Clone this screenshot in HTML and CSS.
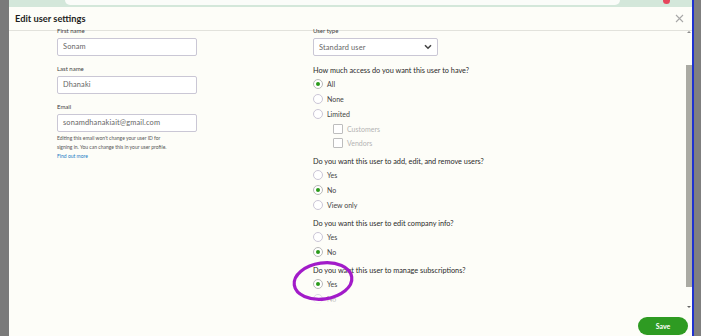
FILE: index.html
```html
<!DOCTYPE html>
<html>
<head>
<meta charset="utf-8">
<link rel="stylesheet" href="styles.css">
</head>
<body>
<div class="screen">
  <div class="side-left"></div>
  <div class="main">
    <div class="topbar"><div class="topbar-field"></div><div class="topbar-dot"></div></div>
    <div class="dialog">
      <div class="dialog-header">
        <h1 class="title">Edit user settings</h1>
        <svg class="close" width="9" height="9" viewBox="0 0 9 9"><path d="M1 1L8 8M8 1L1 8" stroke="#a8a8a8" stroke-width="1.1" fill="none"/></svg>
      </div>
      <div class="dialog-body">
        <div class="content">
          <div class="col-left">
            <div class="field-label">First name</div>
            <div class="input">Sonam</div>
            <div class="field-label">Last name</div>
            <div class="input">Dhanaki</div>
            <div class="field-label">Email</div>
            <div class="input input-email">sonamdhanakiait@gmail.com</div>
            <p class="help">Editing this email won't change your user ID for<br>signing in. You can change this in your user profile.<br><a class="link">Find out more</a></p>
          </div>
          <div class="col-right">
            <div class="field-label">User type</div>
            <div class="select"><span>Standard user</span><svg width="8" height="6" viewBox="0 0 8 6"><path d="M1 1.2L4 4.2L7 1.2" stroke="#444" stroke-width="1.6" fill="none"/></svg></div>
            <div class="question q-first">How much access do you want this user to have?</div>
            <div class="radio-row"><span class="radio checked"></span>All</div>
            <div class="radio-row"><span class="radio"></span>None</div>
            <div class="radio-row"><span class="radio"></span>Limited</div>
            <div class="check-row check-first"><span class="checkbox"></span>Customers</div>
            <div class="check-row"><span class="checkbox"></span>Vendors</div>
            <div class="question">Do you want this user to add, edit, and remove users?</div>
            <div class="radio-row"><span class="radio"></span>Yes</div>
            <div class="radio-row"><span class="radio checked"></span>No</div>
            <div class="radio-row"><span class="radio"></span>View only</div>
            <div class="question">Do you want this user to edit company info?</div>
            <div class="radio-row"><span class="radio"></span>Yes</div>
            <div class="radio-row"><span class="radio checked"></span>No</div>
            <div class="question">Do you want this user to manage subscriptions?</div>
            <div class="radio-row"><span class="radio checked"></span>Yes</div>
            <div class="radio-row"><span class="radio"></span>No</div>
            <div class="radio-row"><span class="radio"></span>View only</div>
          </div>
        </div>
        <div class="scrollbar">
          <div class="arrow-up"></div>
          <div class="thumb"></div>
          <div class="arrow-down"></div>
        </div>
      </div>
      <div class="dialog-footer"><button class="save">Save</button></div>
    </div>
  </div>
  <div class="side-right"></div>
  <svg class="annotation" width="66" height="46" viewBox="0 0 66 46"><ellipse cx="33" cy="23" rx="29" ry="18" transform="rotate(-8 33 23)" stroke="#a21bc9" stroke-width="3.2" fill="none"/></svg>
</div>
</body>
</html>
```

FILE: styles.css
```css
* { box-sizing: border-box; margin: 0; padding: 0; }
body {
  margin: 0;
  width: 701px;
  height: 336px;
  overflow: hidden;
  font-family: Lato, "Open Sans", sans-serif;
  background: #7b7b7b;
}
.screen { display: flex; height: 336px; position: relative; }
.side-left { width: 9px; background: #7a7a7a; }
.side-right { width: 9px; border-left: 2px solid #1f32cf; background: #7f7f7f; }
.main { width: 683px; display: flex; flex-direction: column; }

.topbar { height: 7px; background: #d3e7da; display: flex; align-items: flex-start; padding-left: 56px; flex: none; }
.topbar-field { width: 555px; height: 5px; background: #fafcf9; border-radius: 0 0 6px 6px; }
.topbar-dot { width: 7px; height: 4px; background: #e6455c; border-radius: 0 0 4px 4px; margin-left: 43px; }

.dialog { flex: 1; display: flex; flex-direction: column; background: #fdfdf8; min-height: 0; }
.dialog-header {
  height: 24px;
  flex: none;
  border-bottom: 1px solid #e2e2dc;
  display: flex;
  align-items: center;
  justify-content: space-between;
  padding: 0 8px 0 6px;
}
.title { font-size: 9.3px; font-weight: 700; color: #1e1e1e; }
.close { display: block; }

.dialog-body { flex: 1; display: flex; clip-path: inset(-6px 0 0 0); position: relative; min-height: 0; }
.dialog-body::after {
  content: "";
  position: absolute;
  left: 0; right: 6px; bottom: 0;
  height: 22px;
  background: linear-gradient(to bottom, rgba(253,253,248,0), rgba(253,253,248,0.85) 60%, #fdfdf8);
}
.content { flex: 1; display: flex; align-items: flex-start; padding-left: 48px; margin-top: -4px; gap: 116px; }
.col-left { width: 140px; flex: none; }
.col-right { width: 230px; flex: none; }

.field-label { font-size: 6px; line-height: 8px; height: 8px; margin-bottom: 3px; color: #3e3e3e; }
.input {
  height: 18px;
  border: 1px solid #cac7d5;
  border-radius: 2px;
  background: #fff;
  font-size: 7.4px;
  line-height: 16px;
  padding-left: 5px;
  color: #666;
  letter-spacing: 0.15px;
  margin-bottom: 9px;
}
.input-email { margin-bottom: 2px; }
.help { font-size: 5px; line-height: 9px; color: #555; }
.link { color: #1a7bc4; }

.select {
  width: 125px;
  height: 18px;
  border: 1px solid #cac7d5;
  border-radius: 2px;
  background: #fff;
  display: flex;
  align-items: center;
  justify-content: space-between;
  padding: 0 5px 0 5px;
  font-size: 7.4px;
  color: #666;
  letter-spacing: 0.15px;
}
.question { font-size: 7.3px; line-height: 10px; height: 10px; color: #2a2a2a; margin-top: 7px; white-space: nowrap; }
.q-first { margin-top: 10px; }

.radio-row { height: 15px; display: flex; align-items: center; gap: 4px; font-size: 7px; color: #444; }
.radio {
  width: 10px; height: 10px;
  border: 1px solid #cbc6d6;
  border-radius: 50%;
  background: #fff;
  display: flex; align-items: center; justify-content: center;
  flex: none;
}
.radio.checked { border-color: #b9b9b9; }
.radio.checked::after { content: ""; width: 4px; height: 4px; border-radius: 50%; background: #2a9a1b; }

.check-row { height: 14px; display: flex; align-items: center; gap: 4px; padding-left: 20px; font-size: 7px; color: #b4b4b4; }
.check-first { margin-top: 1px; }
.checkbox { width: 10px; height: 10px; border: 1px solid #bdbdbd; border-radius: 1px; background: #fff; flex: none; }

.scrollbar { width: 6px; flex: none; display: flex; flex-direction: column; align-items: center; }
.arrow-up { width: 0; height: 0; border-left: 2px solid transparent; border-right: 2px solid transparent; border-bottom: 2px solid #8c8c8c; flex: none; }
.thumb { width: 6px; height: 222px; background: #aaaaa3; margin-top: 32px; flex: none; }
.arrow-down { width: 0; height: 0; border-left: 2px solid transparent; border-right: 2px solid transparent; border-top: 2px solid #666; margin-top: 19px; flex: none; }

.dialog-footer { height: 24px; flex: none; display: flex; justify-content: flex-end; align-items: flex-start; padding: 5px 4px 0 0; }
.save {
  width: 50px; height: 18px;
  border: none;
  border-radius: 9px;
  background: #2e9b22;
  color: #fff;
  font-family: Lato, "Open Sans", sans-serif;
  font-weight: 700;
  font-size: 7px;
}

.annotation { position: absolute; left: 290px; top: 258px; }
```
